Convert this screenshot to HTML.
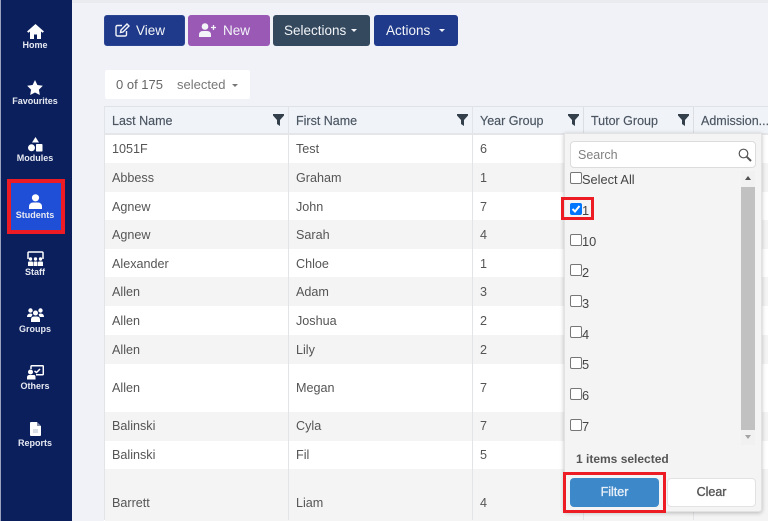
<!DOCTYPE html>
<html><head><meta charset="utf-8">
<style>
html,body{margin:0;padding:0}
body{width:768px;height:521px;position:relative;overflow:hidden;background:#f0f2f7;font-family:"Liberation Sans",sans-serif;color:#555}
div,span,svg{position:absolute;box-sizing:border-box}
.t{white-space:nowrap;line-height:16px}
.nav{color:#e6e9f2;font-size:9px;font-weight:bold;left:0;width:70px;text-align:center;line-height:12px}
.btn{top:15px;height:31px;border-radius:3px;color:#f2f4f8;font-size:13.5px;line-height:31px;white-space:nowrap}
.row{left:105px;width:663px}
.c{font-size:12.6px;color:#555;white-space:nowrap;line-height:16px;margin-top:1px}
.h{font-size:12.5px;color:#4a5561;top:113px;white-space:nowrap;line-height:16px;-webkit-text-stroke:.15px #4a5561}
.vl{width:1px;background:#e3e4e7;top:107px;height:413px}
.cb{left:570px;width:12px;height:12px;border:1px solid #767676;border-radius:2px;background:#fff}
.lb{left:582px;font-size:12.8px;color:#444;line-height:16px}
</style></head><body>
<div style="left:0;top:0;width:768px;height:3px;background:#e9ebef"></div>
<div style="left:1px;top:0;width:71px;height:521px;background:#0b1f5c"></div>
<div style="left:0;top:0;width:1px;height:521px;background:#9aa3bd"></div>

<div style="left:11px;top:183px;width:51px;height:49px;background:#1f4fd6"></div>
<div style="left:7px;top:179px;width:58px;height:55px;border:4px solid #ed1c24"></div>

<svg style="left:27px;top:24px" width="17" height="15" viewBox="0 0 17 15"><path fill="#fff" d="M8.500 0 L17 7.500 L15.500 8.800 L14 7.500 V15 H10 V10.500 H7 V15 H3 V7.500 L1.500 8.800 L0 7.500 Z"/></svg>
<div class="nav" style="top:39px">Home</div>
<svg style="left:27px;top:80px" width="16" height="15" viewBox="0 0 24 23"><path fill="#fff" d="M12 0l3.700 7.600 8.300 1.200-6 5.900 1.400 8.300L12 19.100 4.600 23 6 14.700 0 8.800l8.300-1.200z"/></svg>
<div class="nav" style="top:95px">Favourites</div>
<svg style="left:28px;top:137px" width="15" height="15" viewBox="0 0 15 15"><path fill="#fff" d="M7.500 0 L11 5.500 H4 Z"/><circle cx="3.500" cy="10.800" r="3.500" fill="#fff"/><rect x="8" y="7" width="6.500" height="7.500" rx=".8" fill="#fff"/></svg>
<div class="nav" style="top:152px">Modules</div>
<svg style="left:29px;top:194px" width="13" height="15" viewBox="0 0 13 15"><circle cx="6.500" cy="3.800" r="3.600" fill="#fff"/><path fill="#fff" d="M0 15 V12.500 C0 10 2 8.500 4 8.500 H9 C11 8.500 13 10 13 12.500 V15 Z"/></svg>
<div class="nav" style="top:209px">Students</div>
<svg style="left:27px;top:251px" width="17" height="15" viewBox="0 0 17 15"><path fill="none" stroke="#fff" stroke-width="1.500" d="M1 8 V2 Q1 1 2 1 H15 Q16 1 16 2 V8"/><circle cx="3.500" cy="8" r="1.700" fill="#fff"/><circle cx="8.500" cy="8" r="1.700" fill="#fff"/><circle cx="13.500" cy="8" r="1.700" fill="#fff"/><path fill="#fff" d="M1 15 V11.500 Q1 10.500 2 10.500 H5 Q6 10.500 6 11.500 V15 Z M6.500 15 V11.500 Q6.500 10.500 7.500 10.500 H9.500 Q10.500 10.500 10.500 11.500 V15 Z M11 15 V11.500 Q11 10.500 12 10.500 H15 Q16 10.500 16 11.500 V15 Z"/></svg>
<div class="nav" style="top:266px">Staff</div>
<svg style="left:27px;top:308px" width="17" height="14" viewBox="0 0 17 14"><circle cx="3.500" cy="2.500" r="2.200" fill="#fff"/><circle cx="13.500" cy="2.500" r="2.200" fill="#fff"/><circle cx="8.500" cy="5" r="2.500" fill="#fff"/><path fill="#fff" d="M0 9 Q0 5.500 3.500 5.500 Q5 5.500 5.500 6.500 Q5 8 4 9 Z M17 9 Q17 5.500 13.500 5.500 Q12 5.500 11.500 6.500 Q12 8 13 9 Z M4 14 V11.500 Q4 8.500 7 8.500 H10 Q13 8.500 13 11.500 V14 Z"/></svg>
<div class="nav" style="top:323px">Groups</div>
<svg style="left:27px;top:365px" width="17" height="15" viewBox="0 0 17 15"><path fill="none" stroke="#fff" stroke-width="1.500" d="M4 4 V1.500 Q4 .7 5 .7 H15.500 Q16.300 .7 16.300 1.500 V9 Q16.300 9.800 15.500 9.800 H9"/><path fill="none" stroke="#fff" stroke-width="1.500" d="M7.500 6 L9.500 7.500 L13 4"/><circle cx="3.500" cy="7" r="2.500" fill="#fff"/><path fill="#fff" d="M0 14.500 V12.500 Q0 10 2.500 10 H7 Q8.500 10 8.500 12 V14.500 Z"/></svg>
<div class="nav" style="top:380px">Others</div>
<svg style="left:30px;top:422px" width="11" height="14" viewBox="0 0 11 14"><path fill="#fff" d="M1 0 H7 L11 4 V13 Q11 14 10 14 H1 Q0 14 0 13 V1 Q0 0 1 0 Z"/><path fill="#0b1f5c" d="M7 0 V4 H11 Z" opacity=".5"/><path stroke="#b5bccf" stroke-width="1" d="M3 8 H8 M3 10 H8"/></svg>
<div class="nav" style="top:437px">Reports</div>

<div class="btn" style="left:104px;width:81px;background:#1f3a8a;border:1px solid #2a4592"></div>
<svg style="left:115px;top:23px" width="15" height="14" viewBox="0 0 15 14"><path fill="none" stroke="#f2f4f8" stroke-width="1.400" d="M7 2.500 H2.500 Q1 2.500 1 4 V11.500 Q1 13 2.500 13 H10 Q11.500 13 11.500 11.500 V8"/><path fill="none" stroke="#f2f4f8" stroke-width="1.400" d="M5.500 9.500 L6 7 L12 1 L14 3 L8 9 Z"/></svg>
<div class="t" style="left:136px;top:23px;color:#f2f4f8;font-size:13.500px">View</div>
<div class="btn" style="left:188px;width:82px;background:#9b59b6"></div>
<svg style="left:199px;top:23px" width="18" height="14" viewBox="0 0 18 14"><circle cx="6" cy="3.500" r="3.300" fill="#f2f4f8"/><path fill="#f2f4f8" d="M0 14 V12 Q0 8 4 8 H8 Q12 8 12 12 V14 Z"/><path stroke="#f2f4f8" stroke-width="1.300" d="M14.500 2 V7 M12 4.500 H17"/></svg>
<div class="t" style="left:223px;top:23px;color:#f2f4f8;font-size:13.500px">New</div>
<div class="btn" style="left:273px;width:97px;background:#34495e;padding-left:11px">Selections</div>
<div style="left:351px;top:29px;border:3.500px solid transparent;border-top:3.500px solid #f2f4f8;border-bottom:0"></div>
<div class="btn" style="left:374px;width:84px;background:#1f3a8a;padding-left:12px">Actions</div>
<div style="left:439px;top:29px;border:3.500px solid transparent;border-top:3.500px solid #f2f4f8;border-bottom:0"></div>

<div style="left:105px;top:70px;width:145px;height:29px;background:#fff;border-radius:2px"></div>
<div class="t" style="left:116px;top:77px;font-size:13px;color:#666">0 of 175</div>
<div class="t" style="left:177px;top:77px;font-size:13px;color:#777">selected</div>
<div style="left:232px;top:84px;border:3.500px solid transparent;border-top:3.500px solid #777;border-bottom:0"></div>

<!-- table -->
<div style="left:104px;top:106px;width:664px;height:415px;background:#fff"></div>
<div class="row" style="top:107px;height:27px;background:#f0f3f8"></div>
<div style="left:104px;top:106px;width:664px;height:1px;background:#dfe2e7"></div>
<div style="left:104px;top:133px;width:664px;height:2px;background:#e4e6ea"></div>
<div class="row" style="top:163px;height:29px;background:#f4f4f4"></div>
<div class="row" style="top:220px;height:29px;background:#f4f4f4"></div>
<div class="row" style="top:277px;height:29px;background:#f4f4f4"></div>
<div class="row" style="top:335px;height:29px;background:#f4f4f4"></div>
<div class="row" style="top:412px;height:29px;background:#f4f4f4"></div>
<div class="row" style="top:469px;height:52px;background:#f4f4f4"></div>
<div class="vl" style="left:104px"></div>
<div class="vl" style="left:288px"></div>
<div class="vl" style="left:472px"></div>
<div class="vl" style="left:583px;height:28px;background:#dcdee2"></div>
<div class="vl" style="left:693px;height:28px;background:#dcdee2"></div>
<div class="vl" style="left:583px;top:505px;height:15px"></div>
<div class="vl" style="left:693px;top:505px;height:15px"></div>

<div class="h" style="left:112px">Last Name</div>
<div class="h" style="left:296px">First Name</div>
<div class="h" style="left:480px">Year Group</div>
<div class="h" style="left:591px">Tutor Group</div>
<div class="h" style="left:701px">Admission...</div>
<svg style="left:273px;top:114px" width="11" height="12" viewBox="0 0 11 12"><path fill="#333f4b" d="M0 0 H11 V1.500 L7 6 V12 L4 10 V6 L0 1.500 Z"/></svg>
<svg style="left:457px;top:114px" width="11" height="12" viewBox="0 0 11 12"><path fill="#333f4b" d="M0 0 H11 V1.500 L7 6 V12 L4 10 V6 L0 1.500 Z"/></svg>
<svg style="left:568px;top:114px" width="11" height="12" viewBox="0 0 11 12"><path fill="#333f4b" d="M0 0 H11 V1.500 L7 6 V12 L4 10 V6 L0 1.500 Z"/></svg>
<svg style="left:678px;top:114px" width="11" height="12" viewBox="0 0 11 12"><path fill="#333f4b" d="M0 0 H11 V1.500 L7 6 V12 L4 10 V6 L0 1.500 Z"/></svg>

<div class="c" style="left:112px;top:140px">1051F</div><div class="c" style="left:296px;top:140px">Test</div><div class="c" style="left:480px;top:140px">6</div>
<div class="c" style="left:112px;top:169px">Abbess</div><div class="c" style="left:296px;top:169px">Graham</div><div class="c" style="left:480px;top:169px">1</div>
<div class="c" style="left:112px;top:198px">Agnew</div><div class="c" style="left:296px;top:198px">John</div><div class="c" style="left:480px;top:198px">7</div>
<div class="c" style="left:112px;top:226px">Agnew</div><div class="c" style="left:296px;top:226px">Sarah</div><div class="c" style="left:480px;top:226px">4</div>
<div class="c" style="left:112px;top:255px">Alexander</div><div class="c" style="left:296px;top:255px">Chloe</div><div class="c" style="left:480px;top:255px">1</div>
<div class="c" style="left:112px;top:283px">Allen</div><div class="c" style="left:296px;top:283px">Adam</div><div class="c" style="left:480px;top:283px">3</div>
<div class="c" style="left:112px;top:312px">Allen</div><div class="c" style="left:296px;top:312px">Joshua</div><div class="c" style="left:480px;top:312px">2</div>
<div class="c" style="left:112px;top:341px">Allen</div><div class="c" style="left:296px;top:341px">Lily</div><div class="c" style="left:480px;top:341px">2</div>
<div class="c" style="left:112px;top:379px">Allen</div><div class="c" style="left:296px;top:379px">Megan</div><div class="c" style="left:480px;top:379px">7</div>
<div class="c" style="left:112px;top:417px">Balinski</div><div class="c" style="left:296px;top:417px">Cyla</div><div class="c" style="left:480px;top:417px">7</div>
<div class="c" style="left:112px;top:446px">Balinski</div><div class="c" style="left:296px;top:446px">Fil</div><div class="c" style="left:480px;top:446px">5</div>
<div class="c" style="left:112px;top:494px">Barrett</div><div class="c" style="left:296px;top:494px">Liam</div><div class="c" style="left:480px;top:494px">4</div>

<!-- popup -->
<div style="left:564px;top:133px;width:198px;height:379px;background:#f4f4f4;border:1px solid #e2e2e2;border-radius:0 0 3px 3px;box-shadow:0 1px 4px rgba(0,0,0,.25)"></div>
<div style="left:570px;top:141px;width:186px;height:27px;background:#fff;border:1px solid #dcdcdc;border-radius:4px"></div>
<div class="t" style="left:578px;top:147px;font-size:12.500px;color:#808080">Search</div>
<svg style="left:738px;top:148px" width="14" height="14" viewBox="0 0 14 14"><circle cx="5.500" cy="5.500" r="4.300" fill="none" stroke="#555" stroke-width="1.200"/><path stroke="#555" stroke-width="2" d="M8.800 8.800 L13 13"/></svg>

<div style="left:741px;top:171px;width:14px;height:274px;background:#f1f1f1"></div>
<div style="left:741px;top:187px;width:14px;height:243px;background:#c1c1c1"></div>
<div style="left:745px;top:176px;border:3px solid transparent;border-bottom:4px solid #505050;border-top:0"></div>
<div style="left:745px;top:435px;border:3px solid transparent;border-top:4px solid #a3a3a3;border-bottom:0"></div>

<div class="cb" style="top:172px"></div><div class="lb" style="top:172px">Select All</div>
<div class="cb" style="top:203px;background:#0075ff;border-color:#0075ff"></div>
<svg style="left:570px;top:203px" width="12" height="12" viewBox="0 0 12 12"><path fill="none" stroke="#fff" stroke-width="2" d="M2.500 6 L5 8.500 L9.500 3"/></svg>
<div class="lb" style="top:203px">1</div>
<div style="left:561px;top:197px;width:33px;height:23px;border:3px solid #ed1c24"></div>
<div class="cb" style="top:234px"></div><div class="lb" style="top:234px">10</div>
<div class="cb" style="top:264px"></div><div class="lb" style="top:265px">2</div>
<div class="cb" style="top:295px"></div><div class="lb" style="top:296px">3</div>
<div class="cb" style="top:326px"></div><div class="lb" style="top:327px">4</div>
<div class="cb" style="top:357px"></div><div class="lb" style="top:357px">5</div>
<div class="cb" style="top:388px"></div><div class="lb" style="top:388px">6</div>
<div class="cb" style="top:419px"></div><div class="lb" style="top:419px">7</div>

<div class="t" style="left:576px;top:451px;font-size:12px;font-weight:bold;color:#555">1 items selected</div>
<div style="left:570px;top:478px;width:89px;height:29px;background:#3d88c9;border-radius:4px;color:#e8f0f8;font-size:12.500px;text-align:center;line-height:28px;-webkit-text-stroke:.35px #e8f0f8">Filter</div>
<div style="left:563px;top:472px;width:103px;height:41px;border:3px solid #ed1c24"></div>
<div style="left:667px;top:478px;width:89px;height:29px;background:#fff;border:1px solid #e2e2e2;border-radius:4px;color:#555;font-size:12.500px;text-align:center;line-height:27px;-webkit-text-stroke:.35px #555">Clear</div>
</body></html>
